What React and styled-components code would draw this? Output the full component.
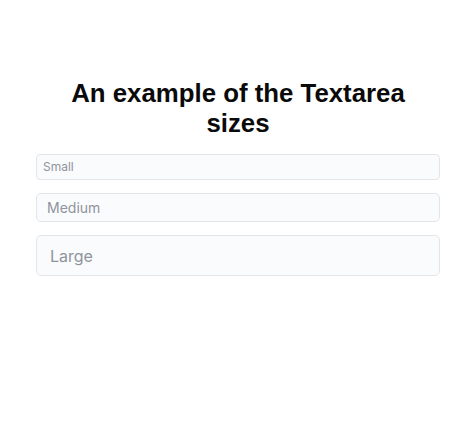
import styled, { createGlobalStyle } from "styled-components"

const GlobalStyle = createGlobalStyle`
body {
    margin: 0;
    background: #ffffff;
    font-family: 'Liberation Sans', Arial, sans-serif;
}
`

const sizes = {
    small: { font: 12, line: 16, padY: 4, padX: 6, radius: 4 },
    medium: { font: 14, line: 19, padY: 4, padX: 10, radius: 5 },
    large: { font: 16, line: 20, padY: 9.5, padX: 13, radius: 5 },
}

export default function App() {
    return (
        <Page>
            <GlobalStyle />
            <Title>An example of the Textarea sizes</Title>
            <Stack>
                <Area $size="small" rows={1} placeholder="Small" />
                <Area $size="medium" rows={1} placeholder="Medium" />
                <Area $size="large" rows={1} placeholder="Large" />
            </Stack>
        </Page>
    )
}

const Page = styled.div`
width: 404px;
margin: 0 0 0 36px;
padding-top: 78px;
`

const Title = styled.h1`
margin: 0 0 16px;
font-family: 'Liberation Sans', Arial, sans-serif;
font-size: 25.8px;
line-height: 30px;
font-weight: 700;
text-align: center;
color: #0a0a0a;
padding: 0 30px;
`

const Stack = styled.div`
display: flex;
flex-direction: column;
gap: 13px;
`

const Area = styled.textarea`
display: block;
box-sizing: border-box;
width: 100%;
resize: none;
overflow: hidden;
margin: 0;
font-family: Inter, 'Noto Sans', sans-serif;
font-size: ${(p) => sizes[p.$size].font}px;
line-height: ${(p) => sizes[p.$size].line}px;
padding: ${(p) => sizes[p.$size].padY}px ${(p) => sizes[p.$size].padX}px;
border-radius: ${(p) => sizes[p.$size].radius}px;
border: 1px solid #e3e5e8;
background: #fafbfd;
color: #222222;
outline: none;

&::placeholder {
    color: #8f949b;
}
`
